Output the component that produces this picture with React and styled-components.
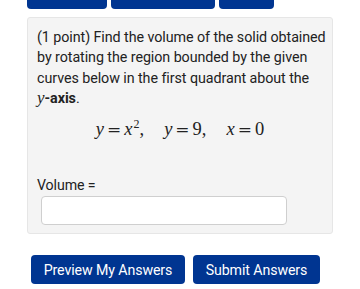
import React from "react";
import styled, { createGlobalStyle } from "styled-components";

const Global = createGlobalStyle`
  body {
    margin: 0;
    background: #ffffff;
    font-family: Roboto, "Liberation Sans", sans-serif;
    color: #222;
  }
`;

const TopNav = styled.div`
  display: flex;
  gap: 4px;
  padding-left: 27px;
  height: 9px;
  overflow: hidden;
`;

const NavButton = styled.div`
  width: ${(p) => p.w}px;
  height: 9px;
  background: #003591;
  border-radius: 0 0 4px 4px;
`;

const Card = styled.div`
  margin: 8px 0 0 27px;
  width: 306px;
  box-sizing: border-box;
  background: #f4f4f4;
  border: 1px solid #e6e6e6;
  border-radius: 3px;
  padding: 9px 4px 8px 9px;
`;

const Prompt = styled.p`
  margin: 0;
  font-size: 14.3px;
  letter-spacing: -0.07px;
  line-height: 20.3px;
  color: #222;
`;

const Axis = styled.span`
  white-space: nowrap;
`;

const MathVar = styled.i`
  font-family: "Liberation Serif", serif;
  font-style: italic;
  font-weight: normal;
  font-size: 17px;
  letter-spacing: 0;
`;

const MathLine = styled.div`
  display: flex;
  justify-content: center;
  align-items: baseline;
  margin: 11px 5px 0 0;
  height: 32px;
  font-family: "Liberation Serif", serif;
  font-size: 18.5px;
  color: #222;
`;

const Term = styled.span`
  margin-right: ${(p) => (p.last ? 0 : 20)}px;
  white-space: nowrap;
`;

const V = styled.span`
  font-style: italic;
`;

const Eq = styled.span`
  font-family: "DejaVu Serif", serif;
  font-size: 17px;
  margin: 0 3px;
`;

const Sup = styled.sup`
  font-size: 12px;
  line-height: 0;
  margin-left: 1px;
`;

const Label = styled.div`
  margin-top: 24px;
  font-size: 14.2px;
  letter-spacing: -0.1px;
  line-height: 20px;
`;

const AnswerInput = styled.input`
  display: block;
  margin: 1px 0 0 4px;
  width: 246px;
  height: 29px;
  box-sizing: border-box;
  background: #fff;
  border: 1px solid #cfcfcf;
  border-radius: 4px;
  outline: none;
`;

const Actions = styled.div`
  display: flex;
  gap: 8px;
  padding-left: 31px;
  margin-top: 21px;
`;

const Button = styled.button`
  width: ${(p) => p.w}px;
  height: 29px;
  background: #003591;
  color: #fff;
  border: none;
  border-radius: 4px;
  font-family: Roboto, "Liberation Sans", sans-serif;
  font-size: 14.2px;
  letter-spacing: -0.1px;
  padding: 0;
`;

export default function App() {
  return (
    <>
      <Global />
      <TopNav>
        <NavButton w={80} />
        <NavButton w={104} />
        <NavButton w={55} />
      </TopNav>
      <Card>
        <Prompt>
          (1 point) Find the volume of the solid obtained by rotating the region bounded by the
          given curves below in the first quadrant about the{" "}
          <Axis>
            <MathVar>y</MathVar>
            <b>-axis</b>.
          </Axis>
        </Prompt>
        <MathLine>
          <Term>
            <V>y</V>
            <Eq>=</Eq>
            <V>x</V>
            <Sup>2</Sup>,
          </Term>
          <Term>
            <V>y</V>
            <Eq>=</Eq>9,
          </Term>
          <Term last>
            <V>x</V>
            <Eq>=</Eq>0
          </Term>
        </MathLine>
        <Label>Volume =</Label>
        <AnswerInput type="text" />
      </Card>
      <Actions>
        <Button w={154}>Preview My Answers</Button>
        <Button w={127}>Submit Answers</Button>
      </Actions>
    </>
  );
}
